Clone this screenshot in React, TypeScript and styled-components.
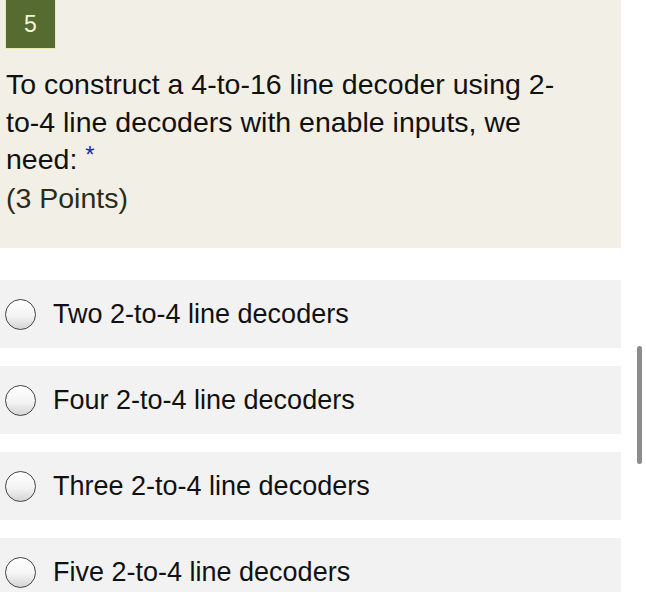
import styled, { createGlobalStyle } from "styled-components";

const options = [
  "Two 2-to-4 line decoders",
  "Four 2-to-4 line decoders",
  "Three 2-to-4 line decoders",
  "Five 2-to-4 line decoders",
];

export default function App() {
  return (
    <Page>
      <GlobalStyle />
      <QuestionCard>
        <Badge>5</Badge>
        <QuestionText>
          To construct a 4-to-16 line decoder using 2-to-4 line decoders with enable inputs, we need:
          <Required>*</Required>
        </QuestionText>
        <Points>(3 Points)</Points>
      </QuestionCard>
      <Choices>
        {options.map((o) => (
          <Choice key={o}>
            <Radio />
            <ChoiceLabel>{o}</ChoiceLabel>
          </Choice>
        ))}
      </Choices>
      <Scrollbar />
    </Page>
  );
}

const GlobalStyle = createGlobalStyle`
  html, body {
    margin: 0;
    background: #ffffff;
    overflow: hidden;
  }
  body {
    font-family: "Liberation Sans", Arial, sans-serif;
    color: #111;
  }
`;

const Page = styled.div`
  position: relative;
  width: 646px;
  height: 592px;
  overflow: hidden;
`;

const QuestionCard = styled.div`
  width: 621px;
  height: 248px;
  box-sizing: border-box;
  background: #f2f0e6;
  padding: 0 0 0 6px;
`;

const Badge = styled.div`
  display: flex;
  align-items: center;
  justify-content: center;
  width: 51px;
  height: 49px;
  margin-left: -1px;
  box-sizing: border-box;
  background: #566b30;
  border: 1px solid #e8ecb0;
  border-top: none;
  color: #f4f4dc;
  font-size: 23px;
`;

const QuestionText = styled.div`
  width: 552px;
  margin-top: 17px;
  font-size: 28.5px;
  line-height: 37.5px;
  color: #111;
`;

const Required = styled.span`
  display: inline-block;
  margin-left: 8px;
  color: #1a2a9a;
  font-size: 24px;
  line-height: 1;
  vertical-align: 6px;
`;

const Points = styled.div`
  margin-top: 1px;
  font-size: 28.5px;
  line-height: 37.5px;
  color: #2b2b1a;
`;

const Choices = styled.div`
  display: flex;
  flex-direction: column;
  gap: 18px;
  margin-top: 32px;
  width: 621px;
`;

const Choice = styled.div`
  display: flex;
  align-items: center;
  gap: 18px;
  height: 68px;
  padding-left: 5px;
  background: #f2f2f2;
`;

const Radio = styled.span`
  width: 31px;
  height: 31px;
  box-sizing: border-box;
  border-radius: 50%;
  border: 1.5px solid #444;
  background: linear-gradient(180deg, #ffffff 0%, #f4f4f4 55%, #d4d4d4 100%);
  flex-shrink: 0;
`;

const ChoiceLabel = styled.span`
  margin-left: -1px;
  font-size: 27px;
  color: #111;
`;

const Scrollbar = styled.div`
  position: absolute;
  left: 637px;
  top: 346px;
  width: 5px;
  height: 118px;
  border-radius: 3px;
  background: #8c8c8c;
`;
